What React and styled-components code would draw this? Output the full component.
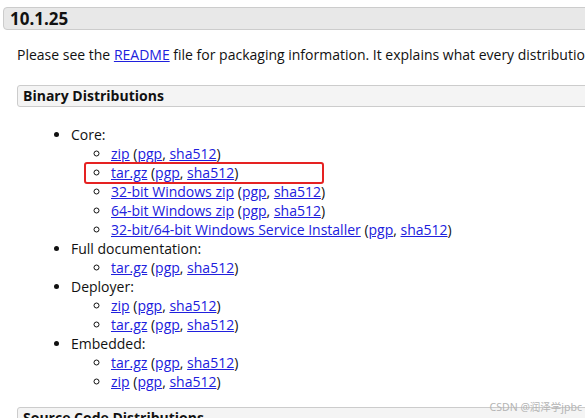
import React from "react";
import styled, { createGlobalStyle } from "styled-components";

const GlobalStyle = createGlobalStyle`
  html, body {
    margin: 0;
    padding: 0;
    background: #ffffff;
    overflow: hidden;
  }
  body {
    font-family: "Open Sans", "Noto Sans", sans-serif;
    color: #111111;
  }
`;

const Page = styled.div`
  position: relative;
  width: 585px;
  height: 418px;
  overflow: hidden;
  padding-top: 7px;
  box-sizing: border-box;
`;

const Release = styled.h3`
  margin: 0 -40px 0 3px;
  height: 23px;
  line-height: 22px;
  padding-left: 6px;
  background: #e8e8e8;
  border: 1px solid #cccccc;
  border-radius: 4px 0 0 4px;
  box-sizing: border-box;
  font-size: 17px;
  font-weight: 700;
  color: #111111;
`;

const Body = styled.div`
  padding-left: 17px;
`;

const Intro = styled.p`
  margin: 15px 0 0;
  font-size: 14px;
  line-height: 19px;
  white-space: nowrap;
`;

const Link = styled.a`
  color: #2020dd;
  text-decoration: underline;
`;

const Section = styled.h4`
  margin: 21px -40px 0 0;
  height: 22px;
  line-height: 20px;
  padding-left: 5px;
  background: #f4f4f4;
  border: 1px solid #cccccc;
  border-radius: 3px 0 0 3px;
  box-sizing: border-box;
  font-size: 14px;
  font-weight: 700;
  color: #111111;
`;

const List = styled.ul`
  margin: 18px 0 0;
  padding-left: 54px;
  list-style: disc;
  font-size: 14px;
  line-height: 19px;
`;

const SubList = styled.ul`
  margin: 0;
  padding-left: 40px;
  list-style: circle;
`;

const Item = styled.li`
  position: relative;
  white-space: nowrap;
`;

const Highlight = styled.span`
  position: absolute;
  left: -27px;
  top: -1px;
  width: 240px;
  height: 22px;
  border: 2px solid #e52222;
  border-radius: 3px;
  box-sizing: border-box;
  pointer-events: none;
`;

const NextSection = styled(Section)`
  margin-top: 16px;
`;

const Watermark = styled.div`
  position: absolute;
  right: 3px;
  bottom: 4px;
  font-family: "Noto Sans", "Noto Sans CJK SC", sans-serif;
  font-size: 10.5px;
  color: #b4b4b4;
`;

function Download({ name, marked }) {
  return (
    <Item>
      {marked && <Highlight />}
      <Link href="#">{name}</Link> (<Link href="#">pgp</Link>,{" "}
      <Link href="#">sha512</Link>)
    </Item>
  );
}

const groups = [
  {
    title: "Core:",
    items: [
      { name: "zip" },
      { name: "tar.gz", marked: true },
      { name: "32-bit Windows zip" },
      { name: "64-bit Windows zip" },
      { name: "32-bit/64-bit Windows Service Installer" },
    ],
  },
  { title: "Full documentation:", items: [{ name: "tar.gz" }] },
  { title: "Deployer:", items: [{ name: "zip" }, { name: "tar.gz" }] },
  { title: "Embedded:", items: [{ name: "tar.gz" }, { name: "zip" }] },
];

export default function App() {
  return (
    <Page>
      <GlobalStyle />
      <Release>10.1.25</Release>
      <Body>
        <Intro>
          Please see the <Link href="#">README</Link> file for packaging
          information. It explains what every distribution contains.
        </Intro>
        <Section>Binary Distributions</Section>
        <List>
          {groups.map((group) => (
            <Item key={group.title}>
              {group.title}
              <SubList>
                {group.items.map((item, i) => (
                  <Download key={i} name={item.name} marked={item.marked} />
                ))}
              </SubList>
            </Item>
          ))}
        </List>
        <NextSection>Source Code Distributions</NextSection>
      </Body>
      <Watermark>CSDN @润泽学jpbc</Watermark>
    </Page>
  );
}
